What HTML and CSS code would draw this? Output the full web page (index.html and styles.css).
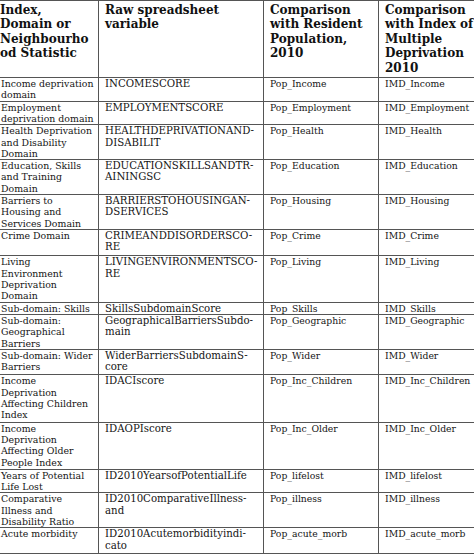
FILE: index.html
```html
<!DOCTYPE html>
<html lang="en">
<head>
<meta charset="utf-8">
<title>Deprivation variables</title>
<link rel="stylesheet" href="styles.css">
</head>
<body>
<div class="page">
<table class="vars">
<colgroup>
<col class="c1"><col class="c2"><col class="c3"><col class="c4">
</colgroup>
<thead>
<tr>
<th>Index,<br>Domain or<br>Neighbourho<br>od Statistic</th>
<th>Raw spreadsheet<br>variable</th>
<th>Comparison<br>with Resident<br>Population,<br>2010</th>
<th>Comparison<br>with Index of<br>Multiple<br>Deprivation<br>2010</th>
</tr>
</thead>
<tbody>
<tr><td class="n">Income deprivation<br>domain</td><td class="r">INCOMESCORE</td><td class="v">Pop_Income</td><td class="v">IMD_Income</td></tr>
<tr><td class="n">Employment<br>deprivation domain</td><td class="r">EMPLOYMENTSCORE</td><td class="v">Pop_Employment</td><td class="v">IMD_Employment</td></tr>
<tr><td class="n">Health Deprivation<br>and Disability<br>Domain</td><td class="r">HEALTHDEPRIVATIONAND-<br>DISABILIT</td><td class="v">Pop_Health</td><td class="v">IMD_Health</td></tr>
<tr><td class="n">Education, Skills<br>and Training<br>Domain</td><td class="r">EDUCATIONSKILLSANDTR-<br>AININGSC</td><td class="v">Pop_Education</td><td class="v">IMD_Education</td></tr>
<tr><td class="n">Barriers to<br>Housing and<br>Services Domain</td><td class="r">BARRIERSTOHOUSINGAN-<br>DSERVICES</td><td class="v">Pop_Housing</td><td class="v">IMD_Housing</td></tr>
<tr class="pad3"><td class="n">Crime Domain</td><td class="r">CRIMEANDDISORDERSCO-<br>RE</td><td class="v">Pop_Crime</td><td class="v">IMD_Crime</td></tr>
<tr><td class="n">Living<br>Environment<br>Deprivation<br>Domain</td><td class="r">LIVINGENVIRONMENTSCO-<br>RE</td><td class="v">Pop_Living</td><td class="v">IMD_Living</td></tr>
<tr><td class="n">Sub-domain: Skills</td><td class="r">SkillsSubdomainScore</td><td class="v">Pop_Skills</td><td class="v">IMD_Skills</td></tr>
<tr><td class="n">Sub-domain:<br>Geographical<br>Barriers</td><td class="r">GeographicalBarriersSubdo-<br>main</td><td class="v">Pop_Geographic</td><td class="v">IMD_Geographic</td></tr>
<tr class="pad2"><td class="n">Sub-domain: Wider<br>Barriers</td><td class="r">WiderBarriersSubdomainS-<br>core</td><td class="v">Pop_Wider</td><td class="v">IMD_Wider</td></tr>
<tr class="pad1"><td class="n">Income<br>Deprivation<br>Affecting Children<br>Index</td><td class="r">IDACIscore</td><td class="v">Pop_Inc_Children</td><td class="v">IMD_Inc_Children</td></tr>
<tr class="pad1"><td class="n">Income<br>Deprivation<br>Affecting Older<br>People Index</td><td class="r">IDAOPIscore</td><td class="v">Pop_Inc_Older</td><td class="v">IMD_Inc_Older</td></tr>
<tr><td class="n">Years of Potential<br>Life Lost</td><td class="r">ID2010YearsofPotentialLife</td><td class="v">Pop_lifelost</td><td class="v">IMD_lifelost</td></tr>
<tr><td class="n">Comparative<br>Illness and<br>Disability Ratio</td><td class="r">ID2010ComparativeIllness-<br>and</td><td class="v">Pop_illness</td><td class="v">IMD_illness</td></tr>
<tr class="pad2"><td class="n">Acute morbidity</td><td class="r">ID2010Acutemorbidityindi-<br>cato</td><td class="v">Pop_acute_morb</td><td class="v">IMD_acute_morb</td></tr>
</tbody>
</table>
</div>
</body>
</html>
```

FILE: styles.css
```css
html, body {
  margin: 0;
  padding: 0;
  background: #ffffff;
}

.page {
  width: 474px;
  height: 554px;
  overflow: hidden;
  background: #e4e4e4;
}

.vars {
  margin-left: -7px;
  border-collapse: collapse;
  table-layout: fixed;
  width: 504px;
  background: #ffffff;
  color: #151515;
  font-family: "DejaVu Serif", "Liberation Serif", serif;
}

.c1 { width: 105px; }
.c2 { width: 165px; }
.c3 { width: 115px; }
.c4 { width: 119px; }

.vars th,
.vars td {
  border: 1px solid #555555;
  text-align: left;
  vertical-align: top;
  white-space: nowrap;
  overflow: hidden;
  padding: 0 0 0 6px;
}

.vars th {
  font-weight: bold;
  font-size: 12px;
  line-height: 14.4px;
  padding-top: 2px;
  padding-bottom: 2px;
  color: #111111;
}

.vars td {
  line-height: 11.3px;
}

.vars td.n {
  font-size: 9.4px;
  padding-left: 7px;
}

.vars td.r {
  font-size: 10.2px;
}

.vars td.v {
  font-size: 9.25px;
}

.vars tr.pad1 td { padding-bottom: 1px; }
.vars tr.pad2 td { padding-bottom: 2px; }
.vars tr.pad3 td { padding-bottom: 3px; }
```
